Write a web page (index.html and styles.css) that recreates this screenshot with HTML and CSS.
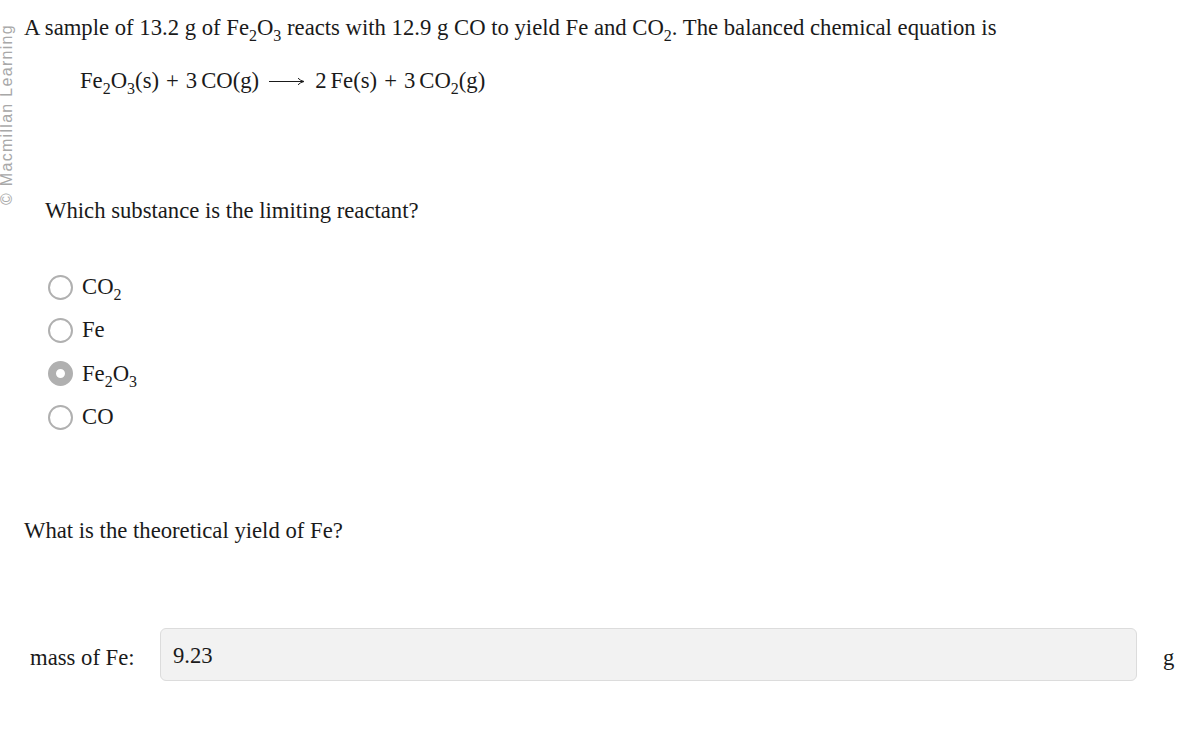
FILE: index.html
```html
<!DOCTYPE html>
<html>
<head>
<meta charset="utf-8">
<link rel="stylesheet" href="styles.css">
</head>
<body>
<div class="watermark">© Macmillan Learning</div>
<div class="page">
  <p class="intro">A sample of 13.2 g of Fe<sub>2</sub>O<sub>3</sub> reacts with 12.9 g CO to yield Fe and CO<sub>2</sub>. The balanced chemical equation is</p>
  <p class="equation">Fe<sub>2</sub>O<sub>3</sub>(s)<span class="op">+</span>3<span class="th"></span>CO(g)<span class="arrow"><svg width="36" height="12" viewBox="0 0 36 12"><path d="M0 6.5H34" stroke="#1a1a1a" stroke-width="1.1" fill="none"/><path d="M29 3.2Q31.5 5.8 35 6.5Q31.5 7.2 29 9.8" stroke="#1a1a1a" stroke-width="1" fill="none"/></svg></span>2<span class="th"></span>Fe(s)<span class="op">+</span>3<span class="th"></span>CO<sub>2</sub>(g)</p>

  <p class="question q1">Which substance is the limiting reactant?</p>
  <ul class="choices">
    <li class="choice"><span class="radio"></span><span class="label">CO<sub>2</sub></span></li>
    <li class="choice"><span class="radio"></span><span class="label">Fe</span></li>
    <li class="choice"><span class="radio checked"></span><span class="label">Fe<sub>2</sub>O<sub>3</sub></span></li>
    <li class="choice"><span class="radio"></span><span class="label">CO</span></li>
  </ul>

  <p class="question q2">What is the theoretical yield of Fe?</p>

  <div class="answer-row">
    <span class="answer-label">mass of Fe:</span>
    <div class="answer-box">9.23</div>
    <span class="unit">g</span>
  </div>
</div>
</body>
</html>
```

FILE: styles.css
```css
html, body {
  margin: 0;
  padding: 0;
  background: #ffffff;
}
body {
  font-family: "Liberation Serif", "Times New Roman", serif;
  color: #1a1a1a;
  font-size: 22.7px;
  width: 1191px;
  height: 752px;
  overflow: hidden;
  position: relative;
}
.watermark {
  position: absolute;
  left: -1px;
  top: 205px;
  transform-origin: 0 0;
  transform: rotate(-90deg);
  font-family: "Liberation Sans", Arial, sans-serif;
  font-size: 16px;
  letter-spacing: 1.3px;
  color: #a8a8a8;
  white-space: nowrap;
  line-height: 16px;
}
.page {
  padding: 0 0 0 24px;
}
p {
  margin: 0;
}
sub {
  font-size: 16px;
  vertical-align: -6px;
  line-height: 0;
}
.intro {
  padding-top: 14px;
  line-height: 28px;
}
.equation {
  margin-top: 25px;
  padding-left: 56px;
  line-height: 28px;
  white-space: nowrap;
}
.op {
  display: inline-block;
  margin: 0 7px;
}
.th {
  display: inline-block;
  width: 4px;
}
.arrow {
  display: inline-block;
  margin: 0 10px 0 10px;
  vertical-align: 1px;
}
.arrow svg {
  display: block;
}
.q1 {
  margin-top: 102px;
  padding-left: 21px;
  line-height: 28px;
}
.choices {
  list-style: none;
  margin: 48px 0 0 24px;
  padding: 0;
  display: flex;
  flex-direction: column;
  gap: 15.4px;
}
.choice {
  display: flex;
  align-items: center;
  gap: 9px;
  height: 28px;
}
.label {
  font-family: "Liberation Serif", "Times New Roman", serif;
}
.radio {
  width: 21px;
  height: 21px;
  border: 2px solid #b0b0b0;
  border-radius: 50%;
  background: #fff;
  flex: none;
  box-sizing: content-box;
}
.radio.checked {
  width: 9px;
  height: 9px;
  border: 8px solid #b0b0b0;
}
.q2 {
  margin-top: 86px;
  line-height: 28px;
}
.answer-row {
  margin-top: 83px;
  display: flex;
  align-items: center;
}
.answer-label {
  padding-left: 6px;
  width: 130px;
  padding-top: 6px;
}
.answer-box {
  font-family: "Liberation Serif", "Times New Roman", serif;
  width: 963px;
  border: 1px solid #dcdcdc;
  border-radius: 6px;
  background: #f2f2f2;
  padding: 13px 0 0 12px;
  box-sizing: content-box;
  height: 38px;
  line-height: 28px;
}
.unit {
  margin-left: 26px;
  padding-top: 6px;
}
```
